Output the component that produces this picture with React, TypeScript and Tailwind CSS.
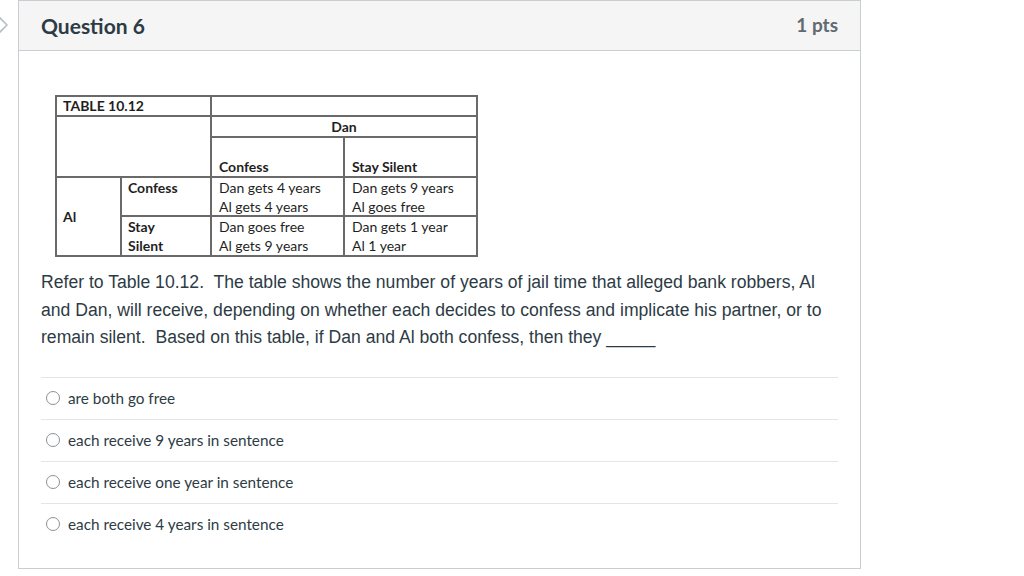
import React from 'react';

const options = [
  'are both go free',
  'each receive 9 years in sentence',
  'each receive one year in sentence',
  'each receive 4 years in sentence',
];

const PayoffTable: React.FC = () => (
  <div className="ml-[14px] grid w-max grid-cols-[63px_88px_131px_131px] grid-rows-[18px_19px_38px_37px_38px] gap-[2px] bg-[#6a6a6a] p-[2px] text-[14px] leading-[19px] text-[#1f1f1f]">
    <div className="col-span-2 bg-white px-[6px] text-[14px] font-bold leading-[18px]">TABLE 10.12</div>
    <div className="col-span-2 bg-white" />
    <div className="col-span-2 row-span-2 bg-white" />
    <div className="col-span-2 bg-white text-center font-bold leading-[19px]">Dan</div>
    <div className="flex items-end bg-white px-[7px] font-bold">Confess</div>
    <div className="flex items-end bg-white px-[7px] font-bold">Stay Silent</div>
    <div className="row-span-2 flex items-center bg-white px-[6px] font-bold">Al</div>
    <div className="bg-white px-[6px] font-bold">Confess</div>
    <div className="bg-white px-[7px]">
      <div>Dan gets 4 years</div>
      <div>Al gets 4 years</div>
    </div>
    <div className="bg-white px-[7px]">
      <div>Dan gets 9 years</div>
      <div>Al goes free</div>
    </div>
    <div className="bg-white px-[6px] font-bold">
      <div>Stay</div>
      <div>Silent</div>
    </div>
    <div className="bg-white px-[7px]">
      <div>Dan goes free</div>
      <div>Al gets 9 years</div>
    </div>
    <div className="bg-white px-[7px]">
      <div>Dan gets 1 year</div>
      <div>Al 1 year</div>
    </div>
  </div>
);

export default function App() {
  return (
    <div className="relative h-[576px] w-[1024px] overflow-hidden bg-white" style={{ fontFamily: 'Lato, "Noto Sans", sans-serif' }}>
      {/* collapse chevron peeking in from the left */}
      <svg className="absolute left-[-6px] top-[14px]" width="16" height="22" viewBox="0 0 16 22" fill="none">
        <path d="M4 2 L13 11 L4 20" stroke="#b9bec2" strokeWidth="1.6" strokeLinejoin="round" strokeLinecap="round" />
      </svg>

      <div className="ml-[18px] h-[569px] w-[843px] border border-[#c7cdd1] bg-white">
        <div className="flex h-[50px] items-center justify-between border-b border-[#c7cdd1] bg-[#f5f5f5] px-[22px]">
          <h2 className="text-[21px] font-bold text-[#2d3b45]">Question 6</h2>
          <span className="text-[19px] font-bold text-[#606a70]">1 pts</span>
        </div>

        <div className="px-[22px] pt-[44px]">
          <PayoffTable />

          <p
            className="mt-[12px] text-[17.6px] leading-[27.5px] text-[#2d3b45]"
            style={{ fontFamily: '"Liberation Sans", Arial, sans-serif' }}
          >
            Refer to Table 10.12.&nbsp; The table shows the number of years of jail time that alleged bank robbers, Al and Dan, will receive, depending on whether each decides to confess and implicate his partner, or to remain silent.&nbsp; Based on this table, if Dan and Al both confess, then they _____
          </p>

          <div className="mt-[25px]">
            {options.map((o) => (
              <label key={o} className="flex h-[42px] items-center border-t border-[#e3e6e8] pl-[5px] text-[15.3px] text-[#2d3b45]">
                <span className="mr-[8px] inline-block h-[14px] w-[14px] rounded-full border border-[#8b9195] bg-white" />
                {o}
              </label>
            ))}
          </div>
        </div>
      </div>
    </div>
  );
}
